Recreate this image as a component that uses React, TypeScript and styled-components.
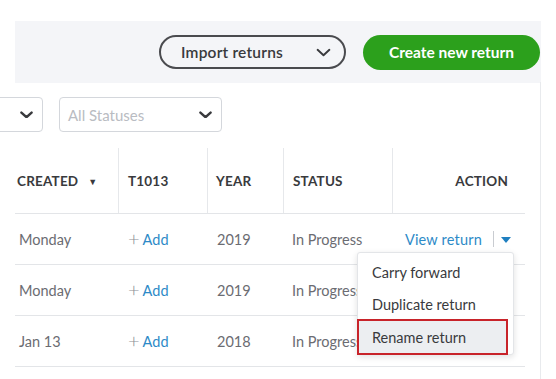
import React from "react";
import styled, { createGlobalStyle } from "styled-components";

const GlobalStyle = createGlobalStyle`
  html, body {
    margin: 0;
    padding: 0;
    background: #ffffff;
    font-family: "Lato", "Open Sans", sans-serif;
    overflow: hidden;
  }
`;

type Row = { created: string; year: string; status: string; menu?: boolean };

const rows: Row[] = [
  { created: "Monday", year: "2019", status: "In Progress", menu: true },
  { created: "Monday", year: "2019", status: "In Progress" },
  { created: "Jan 13", year: "2018", status: "In Progress" },
];

const menuItems = ["Carry forward", "Duplicate return", "Rename return"];

const Chevron: React.FC<{ size?: number; stroke?: number }> = ({ size = 14, stroke = 2 }) => (
  <svg width={size} height={size * 0.6} viewBox="0 0 14 8" fill="none">
    <path d="M1.5 1.5L7 6.5L12.5 1.5" stroke="currentColor" strokeWidth={stroke} strokeLinecap="round" strokeLinejoin="round" />
  </svg>
);

const App: React.FC = () => {
  return (
    <>
      <GlobalStyle />
      <Page>
        <TopBar>
          <ImportButton>
            <span>Import returns</span>
            <Chevron size={15} stroke={1.8} />
          </ImportButton>
          <CreateButton>Create new return</CreateButton>
        </TopBar>

        <Filters>
          <Select $width={150} $cut>
            <span />
            <Chevron size={13} stroke={2.6} />
          </Select>
          <Select $width={163}>
            <Placeholder>All Statuses</Placeholder>
            <Chevron size={13} stroke={2.6} />
          </Select>
        </Filters>

        <Table>
          <HeadRow>
            <HeadCell $pad={2}>
              CREATED <SortCaret>▼</SortCaret>
            </HeadCell>
            <HeadCell $pad={9} $divider>T1013</HeadCell>
            <HeadCell $pad={8} $divider>YEAR</HeadCell>
            <HeadCell $pad={9} $divider>STATUS</HeadCell>
            <HeadCell $pad={0} $divider $right>ACTION</HeadCell>
          </HeadRow>

          {rows.map((r, i) => (
            <BodyRow key={i}>
              <Cell $pad={4}>{r.created}</Cell>
              <Cell $pad={10}>
                <AddLink>
                  <Plus>+</Plus> Add
                </AddLink>
              </Cell>
              <Cell $pad={10}>{r.year}</Cell>
              <Cell $pad={9}>{r.status}</Cell>
              <ActionCell>
                <ViewLink>View return</ViewLink>
                <Split />
                <MenuCaret />
                {r.menu && (
                  <Menu>
                    {menuItems.map((m, j) => (
                      <MenuItem key={m} $active={j === 2}>
                        {m}
                      </MenuItem>
                    ))}
                  </Menu>
                )}
              </ActionCell>
            </BodyRow>
          ))}
        </Table>
      </Page>
    </>
  );
};

export default App;

const Page = styled.div`
  margin-left: 15px;
  width: 526px;
  height: 379px;
  padding-top: 21px;
  box-sizing: border-box;
  position: relative;
  &::after {
    content: "";
    position: absolute;
    right: 0;
    top: 82px;
    bottom: 0;
    width: 1px;
    background: #e8eaed;
  }
`;

const TopBar = styled.div`
  height: 62px;
  background: #f4f5f8;
  display: flex;
  align-items: center;
  justify-content: flex-end;
  gap: 17px;
  padding-right: 1px;
`;

const ImportButton = styled.div`
  width: 187px;
  height: 34px;
  box-sizing: border-box;
  border: 2px solid #4a4b4f;
  border-radius: 17px;
  display: flex;
  align-items: center;
  justify-content: space-between;
  padding: 0 13px 0 20px;
  color: #393a3d;
  font-size: 15.5px;
  font-weight: 600;
  letter-spacing: 0.2px;
  background: #f4f5f8;
`;

const CreateButton = styled.div`
  width: 177px;
  height: 35px;
  border-radius: 18px;
  background: #2ca01c;
  color: #ffffff;
  font-size: 15.5px;
  font-weight: 700;
  display: flex;
  align-items: center;
  justify-content: center;
`;

const Filters = styled.div`
  display: flex;
  gap: 16px;
  margin-top: 14px;
  height: 35px;
`;

const Select = styled.div<{ $width: number; $cut?: boolean }>`
  width: ${(p) => p.$width}px;
  margin-left: ${(p) => (p.$cut ? -122 : 0)}px;
  height: 35px;
  box-sizing: border-box;
  border: 1px solid #d4d7dc;
  border-radius: 4px;
  display: flex;
  align-items: center;
  justify-content: space-between;
  padding: 0 9px 0 8px;
  color: #393a3d;
  flex-shrink: 0;
`;

const Placeholder = styled.span`
  color: #b9bcc2;
  font-size: 15px;
`;

const Table = styled.div`
  margin-top: 16px;
  width: 510px;
`;

const columns = "103px 89px 76px 109px 133px";

const HeadRow = styled.div`
  display: grid;
  grid-template-columns: ${columns};
  height: 65px;
  border-bottom: 1px solid #e3e5e8;
`;

const HeadCell = styled.div<{ $pad: number; $divider?: boolean; $right?: boolean }>`
  display: flex;
  align-items: center;
  justify-content: ${(p) => (p.$right ? "flex-end" : "flex-start")};
  padding-left: ${(p) => p.$pad}px;
  padding-right: ${(p) => (p.$right ? 17 : 0)}px;
  border-left: ${(p) => (p.$divider ? "1px solid #e6e8eb" : "none")};
  color: #393a3d;
  font-size: 13.5px;
  font-weight: 700;
  letter-spacing: 0.2px;
  white-space: nowrap;
`;

const SortCaret = styled.span`
  font-size: 9px;
  margin-left: 10px;
  margin-top: 2px;
`;

const BodyRow = styled.div`
  display: grid;
  grid-template-columns: ${columns};
  height: 50px;
  border-bottom: 1px solid #e3e5e8;
  color: #6b6c72;
  font-size: 14.5px;
`;

const Cell = styled.div<{ $pad: number }>`
  display: flex;
  align-items: center;
  padding-left: ${(p) => p.$pad}px;
  white-space: nowrap;
  overflow: hidden;
`;

const AddLink = styled.span`
  color: #2d8ac7;
  display: flex;
  align-items: center;
  gap: 3px;
`;

const Plus = styled.span`
  color: #8d9096;
  font-size: 20px;
  font-weight: 300;
  line-height: 1;
  margin-top: -2px;
`;

const ActionCell = styled.div`
  position: relative;
  display: flex;
  align-items: center;
  justify-content: flex-end;
  padding-right: 14px;
`;

const ViewLink = styled.span`
  color: #2d8ac7;
  font-size: 14.5px;
  letter-spacing: 0.2px;
`;

const Split = styled.span`
  width: 1px;
  height: 16px;
  background: #c9ccd1;
  margin: 0 7px 0 11px;
`;

const MenuCaret = styled.span`
  width: 0;
  height: 0;
  border-left: 5px solid transparent;
  border-right: 5px solid transparent;
  border-top: 6px solid #1f7fc0;
  margin-top: 2px;
`;

const Menu = styled.div`
  position: absolute;
  top: 38px;
  left: -35px;
  width: 155px;
  background: #ffffff;
  border: 1px solid #e3e5e8;
  border-radius: 3px;
  box-shadow: 0 2px 6px rgba(0, 0, 0, 0.12);
  padding: 3px 0 0;
  z-index: 5;
`;

const MenuItem = styled.div<{ $active?: boolean }>`
  height: ${(p) => (p.$active ? 34 : 32)}px;
  display: flex;
  align-items: center;
  padding-left: 14px;
  color: #393a3d;
  font-size: 14.5px;
  background: ${(p) => (p.$active ? "#eceef1" : "transparent")};
  outline: ${(p) => (p.$active ? "2px solid #c8232a" : "none")};
  outline-offset: -1px;
  width: ${(p) => (p.$active ? "149px" : "auto")};
  box-sizing: border-box;
`;
